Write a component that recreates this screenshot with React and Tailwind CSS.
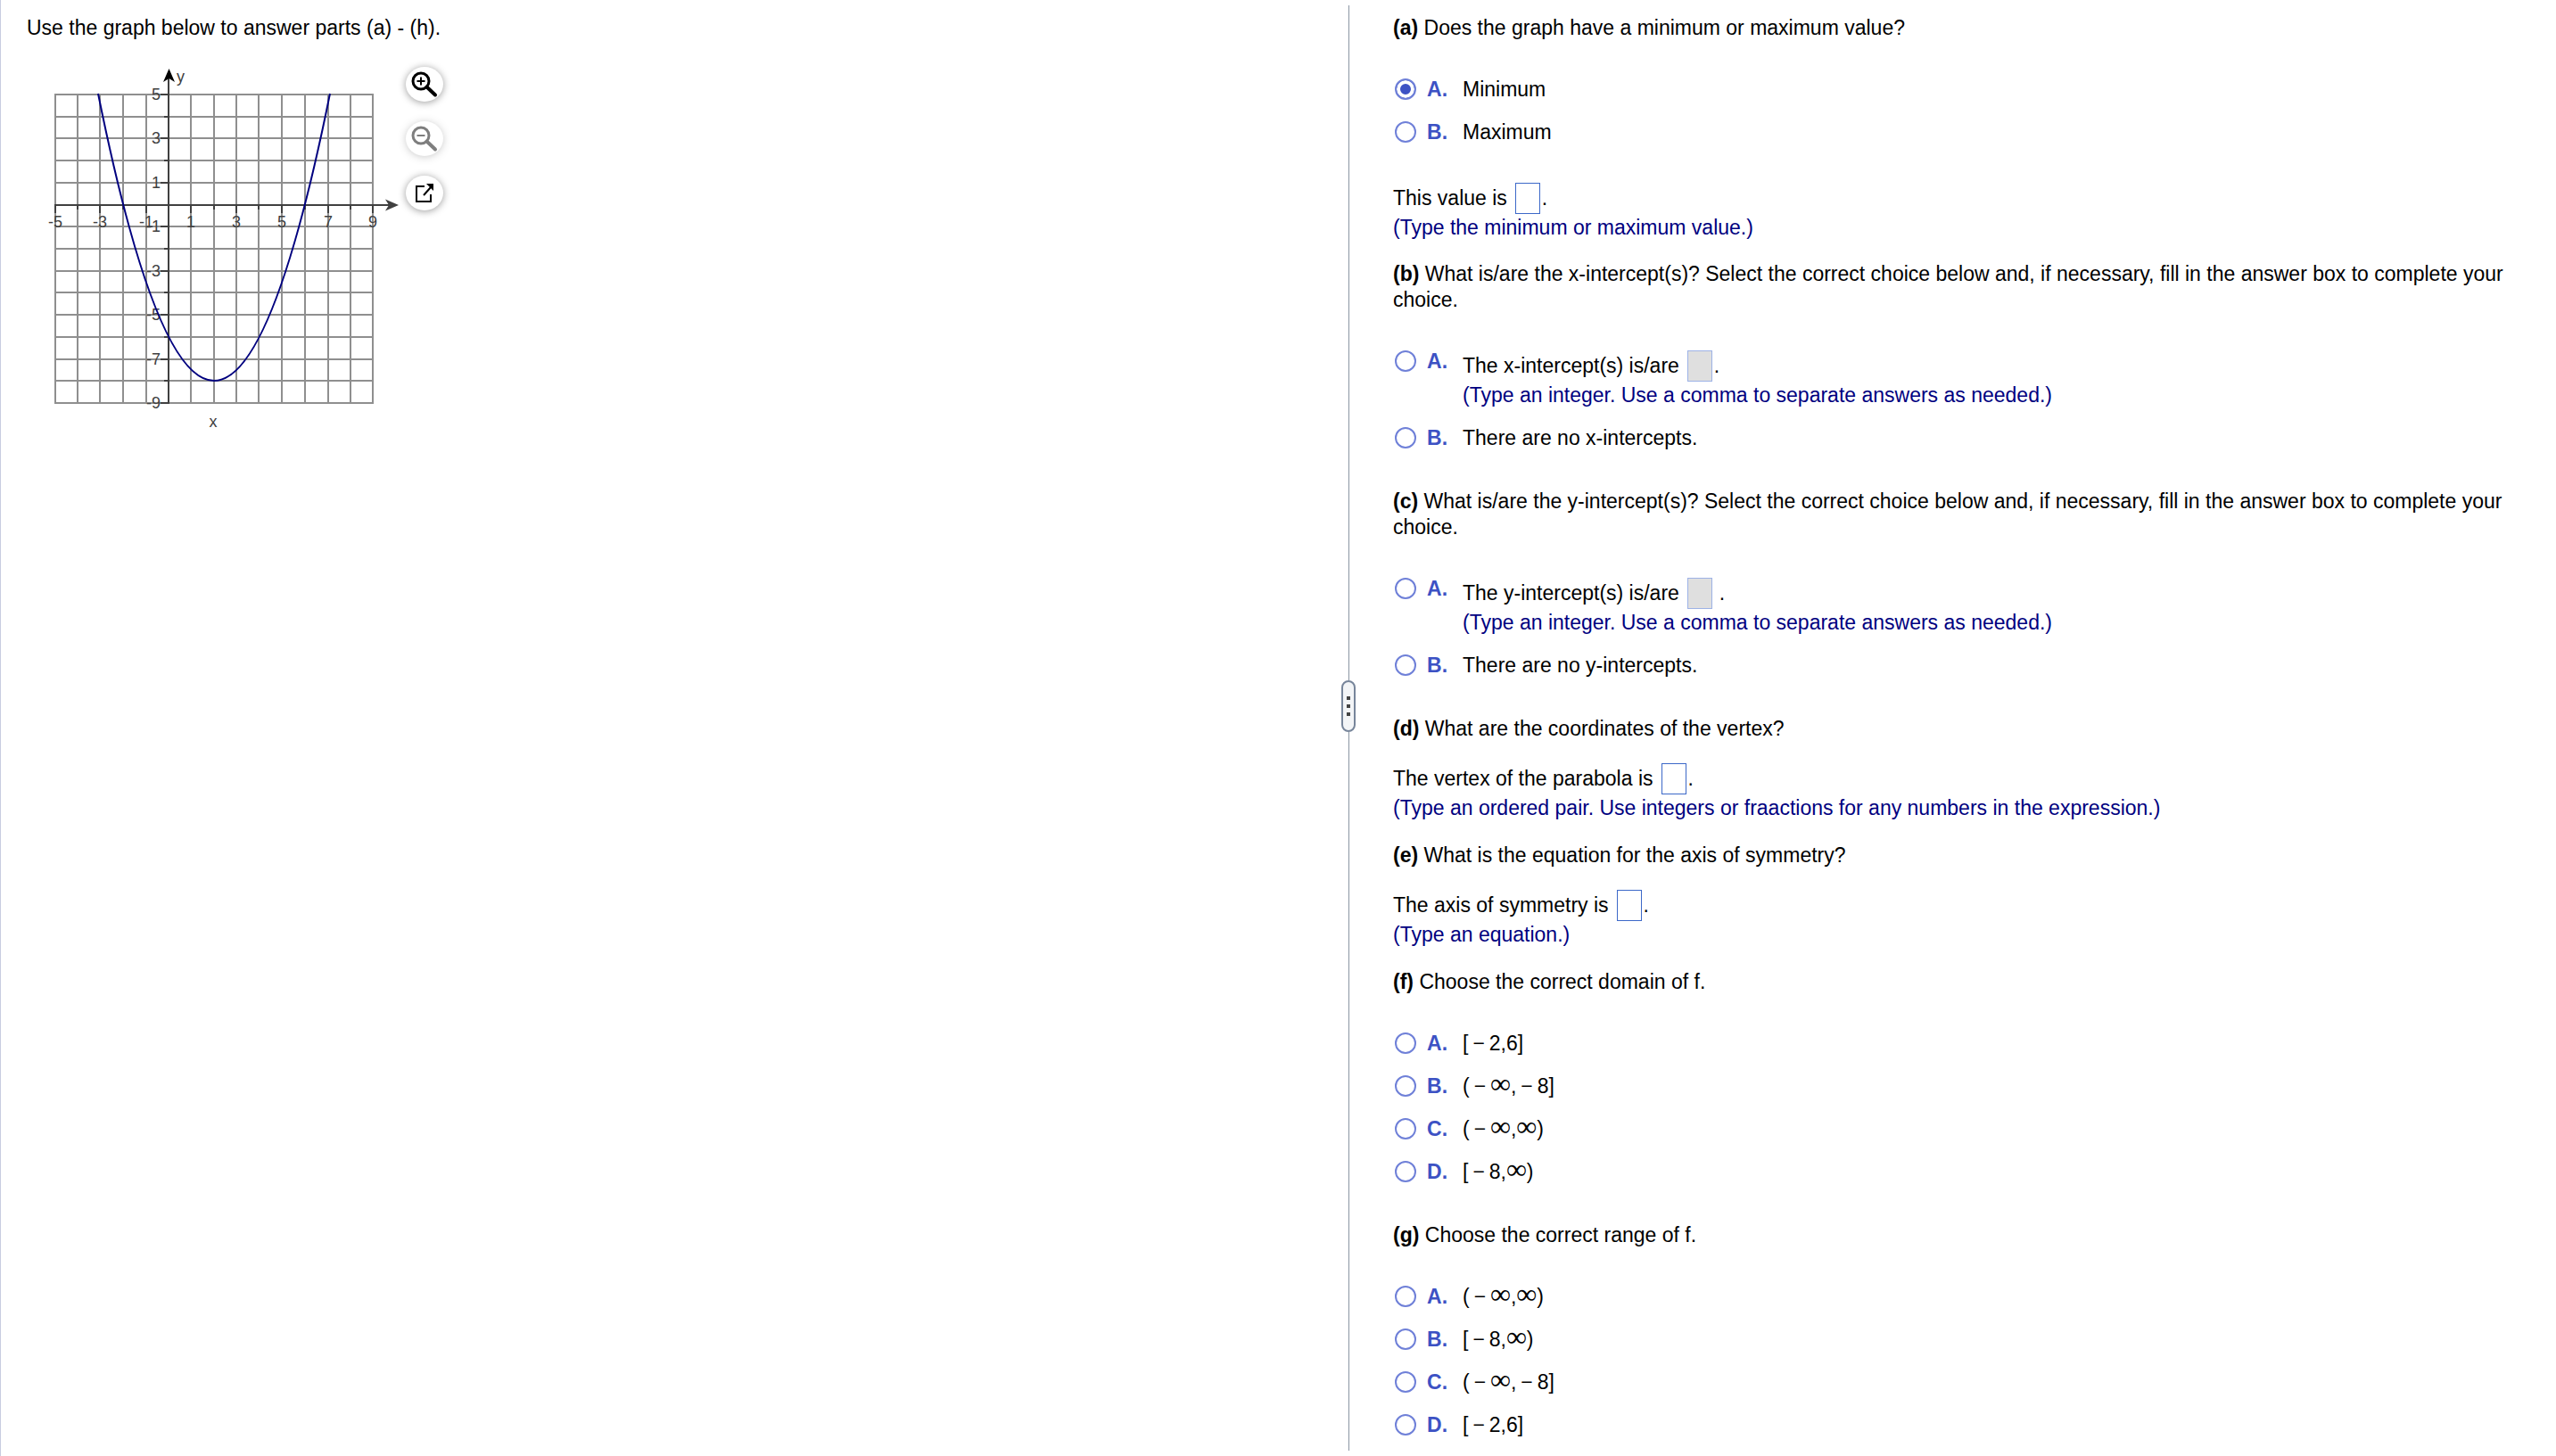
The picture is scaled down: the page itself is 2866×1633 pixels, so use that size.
const GRID_X = [62, 87, 112, 138, 164, 189, 214, 240, 265, 290, 316, 342, 368, 393, 418];
const GRID_Y = [106, 131, 155, 180, 205, 230, 254, 279, 304, 328, 353, 378, 403, 427, 452];

function Graph() {
  return (
    <svg width="450" height="420" viewBox="1 70 450 420" role="img" aria-label="Parabola on a coordinate grid" className="shrink-0">
      <g stroke="#8f8f8f" strokeWidth="2">
        {GRID_X.map((x) => <line key={x} x1={x} x2={x} y1="105" y2="453" />)}
        {GRID_Y.map((y) => <line key={y} x1="61" x2="419" y1={y} y2={y} />)}
      </g>
      <g stroke="#404040" strokeWidth="2">
        <line x1="61" x2="436" y1="230" y2="230" />
        <line x1="189" x2="189" y1="84" y2="453" />
        {GRID_X.map((x, i) => <line key={x} x1={x} x2={x} y1="230" y2={i % 2 ? 235 : 239} />)}
        {GRID_Y.map((y, i) => <line key={y} x1={i % 2 ? 184 : 180} x2="189" y1={y} y2={y} />)}
      </g>
      <path d="M189.500 77L196 92L189.500 88L183 92Z" fill="#000" />
      <path d="M447 230L432 236.500L436 230L432 223.500Z" fill="#404040" />
      <g fill="#404040" fontSize="18">
        {GRID_X.map((x, i) => (i % 2 === 0 ? <text key={x} x={x} y="255" textAnchor="middle">{i - 5}</text> : null))}
        {GRID_Y.map((y, i) => (i % 2 === 0 ? <text key={y} x="180" y={y + 6} textAnchor="end">{5 - i}</text> : null))}
        <text x="198" y="92">y</text>
        <text x="239" y="479" textAnchor="middle">x</text>
      </g>
      <path d="M110 105Q240 749 370 105" fill="none" stroke="#00007f" strokeWidth="2" />
    </svg>
  );
}

function ToolButton({ label, disabled, children }) {
  return (
    <button type="button" aria-label={label} disabled={disabled} className="flex h-[39px] w-[42px] items-center justify-center rounded-[50%] bg-white text-black shadow-[0_1px_9px_rgba(0,0,0,0.4)] disabled:opacity-50">
      {children}
    </button>
  );
}

function Magnifier({ plus }) {
  return (
    <svg width="32" height="32" viewBox="0 0 32 32" fill="none" stroke="currentColor" className="shrink-0">
      <circle cx="12" cy="12" r="9" strokeWidth="3" />
      <path d="M18.500 18.500L28 27.500" strokeWidth="4" strokeLinecap="round" />
      <path d={plus ? "M7.500 12H16.500M12 7.500V16.500" : "M7.500 12H16.500"} strokeWidth="2" />
    </svg>
  );
}

function OpenIcon() {
  return (
    <svg width="32" height="32" viewBox="0 0 32 32" fill="none" stroke="currentColor" strokeWidth="2" className="shrink-0">
      <path d="M16 8H7V25H23V17" />
      <path d="M15 18L23 9" />
      <path d="M18 5H26V13Z" fill="currentColor" stroke="none" />
    </svg>
  );
}

function Splitter() {
  return (
    <div role="separator" aria-orientation="vertical" className="my-1.5 flex w-4 shrink-0 flex-col items-center">
      <div className="w-px flex-[757] bg-[#8b96a3]" />
      <div className="flex h-[58px] w-4 flex-col items-center justify-center gap-[5px] rounded-full border-2 border-[#77859a] bg-[#f3f5f7]">
        <span className="size-1 bg-[#444]" />
        <span className="size-1 bg-[#444]" />
        <span className="size-1 bg-[#444]" />
      </div>
      <div className="w-px flex-[807] bg-[#8b96a3]" />
    </div>
  );
}

function Heading({ part, children }) {
  return <h2><b>({part})</b> {children}</h2>;
}

function Choices({ label, children }) {
  return <div role="radiogroup" aria-label={label} className="mt-10 flex flex-col gap-[19px]">{children}</div>;
}

function Choice({ name, letter, checked, blank, children }) {
  const id = `${name}-${letter}`;
  return (
    <div className="flex items-start">
      <input id={id} type="radio" name={name} defaultChecked={checked} className="mt-0.5 ml-0.5 size-6 shrink-0 appearance-none rounded-full border-2 border-[#6f80d8] bg-white checked:bg-[#3d52c4] checked:shadow-[inset_0_0_0_4px_white]" />
      <label htmlFor={id} className="ml-3 w-10 shrink-0 font-bold text-[#3d52c4]">{letter}.</label>
      {blank ? <div className="pt-0.5">{children}</div> : <label htmlFor={id}>{children}</label>}
    </div>
  );
}

function BlankLine({ id, label, disabled, spaced }) {
  return (
    <div className="mb-px flex h-[35px] items-center">
      <label htmlFor={id}>{label}</label>
      <input id={id} type="text" disabled={disabled} className="ml-[9px] h-[35px] w-7 border border-[#3c68c8] bg-white disabled:border-[#9db2e6] disabled:bg-[#dfdfdf]" />
      <span className={spaced ? "ml-2" : "ml-0.5"}>.</span>
    </div>
  );
}

function Hint({ children }) {
  return <p className="text-[#00007f]">{children}</p>;
}

function Minus() {
  return <span className="mx-[5px]">{"\u2212"}</span>;
}

function Infinity() {
  return <span className="font-['Liberation_Serif',serif] text-[32px] leading-5">∞</span>;
}

export default function App() {
  return (
    <main className="grid min-h-screen grid-cols-[minmax(0,1503fr)_16px_minmax(0,1346fr)] border-l border-[#c8cce0] bg-white font-['Liberation_Sans',Arial,sans-serif] text-[23px] leading-[29px] text-black">
      <section className="pt-[17px]">
        <h1 className="pl-[29px]">Use the graph below to answer parts (a) - (h).</h1>
        <div className="mt-6 flex">
          <Graph />
          <div className="mt-[5px] ml-1 flex flex-col gap-[22px]">
            <ToolButton label="Zoom in"><Magnifier plus /></ToolButton>
            <ToolButton label="Zoom out" disabled><Magnifier /></ToolButton>
            <ToolButton label="Open in new window"><OpenIcon /></ToolButton>
          </div>
        </div>
      </section>

      <Splitter />

      <section className="flex flex-col gap-[42px] pt-[17px] pr-5 pl-[42px]">
        <div>
          <Heading part="a">Does the graph have a minimum or maximum value?</Heading>
          <Choices label="Minimum or maximum">
            <Choice name="extremum" letter="A" checked>Minimum</Choice>
            <Choice name="extremum" letter="B">Maximum</Choice>
          </Choices>
        </div>

        <div>
          <BlankLine id="extreme-value" label="This value is" />
          <Hint>(Type the minimum or maximum value.)</Hint>
          <div className="mt-[23px]">
            <Heading part="b">What is/are the x-intercept(s)? Select the correct choice below and, if necessary, fill in the answer box to complete your choice.</Heading>
            <Choices label="x-intercepts">
              <Choice name="x-intercepts" letter="A" blank>
                <BlankLine id="x-intercept-value" label="The x-intercept(s) is/are" disabled />
                <Hint>(Type an integer. Use a comma to separate answers as needed.)</Hint>
              </Choice>
              <Choice name="x-intercepts" letter="B">There are no x-intercepts.</Choice>
            </Choices>
          </div>
        </div>

        <div>
          <Heading part="c">What is/are the y-intercept(s)? Select the correct choice below and, if necessary, fill in the answer box to complete your choice.</Heading>
          <Choices label="y-intercepts">
            <Choice name="y-intercepts" letter="A" blank>
              <BlankLine id="y-intercept-value" label="The y-intercept(s) is/are" disabled spaced />
              <Hint>(Type an integer. Use a comma to separate answers as needed.)</Hint>
            </Choice>
            <Choice name="y-intercepts" letter="B">There are no y-intercepts.</Choice>
          </Choices>
        </div>

        <div className="flex flex-col gap-6">
          <div>
            <Heading part="d">What are the coordinates of the vertex?</Heading>
            <div className="mt-6">
              <BlankLine id="vertex" label="The vertex of the parabola is" />
              <Hint>(Type an ordered pair. Use integers or fraactions for any numbers in the expression.)</Hint>
            </div>
          </div>
          <div>
            <Heading part="e">What is the equation for the axis of symmetry?</Heading>
            <div className="mt-6">
              <BlankLine id="axis" label="The axis of symmetry is" />
              <Hint>(Type an equation.)</Hint>
            </div>
          </div>
          <div>
            <Heading part="f">Choose the correct domain of f.</Heading>
            <Choices label="Domain">
              <Choice name="domain" letter="A">[<Minus />2,6]</Choice>
              <Choice name="domain" letter="B">(<Minus /><Infinity />,<Minus />8]</Choice>
              <Choice name="domain" letter="C">(<Minus /><Infinity />,<Infinity />)</Choice>
              <Choice name="domain" letter="D">[<Minus />8,<Infinity />)</Choice>
            </Choices>
          </div>
        </div>

        <div>
          <Heading part="g">Choose the correct range of f.</Heading>
          <Choices label="Range">
            <Choice name="range" letter="A">(<Minus /><Infinity />,<Infinity />)</Choice>
            <Choice name="range" letter="B">[<Minus />8,<Infinity />)</Choice>
            <Choice name="range" letter="C">(<Minus /><Infinity />,<Minus />8]</Choice>
            <Choice name="range" letter="D">[<Minus />2,6]</Choice>
          </Choices>
        </div>
      </section>
    </main>
  );
}
